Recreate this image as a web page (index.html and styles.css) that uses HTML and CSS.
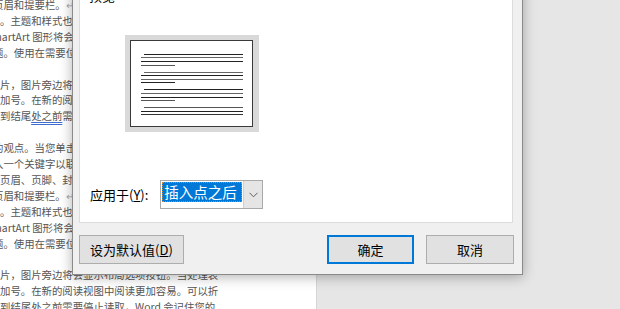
FILE: index.html
```html
<!DOCTYPE html>
<html lang="zh-CN">
<head>
    <meta charset="UTF-8">
    <title>页面设置 - 预览</title>
    <link rel="stylesheet" href="styles.css">
</head>
<body>
    <div class="workspace">
        <div class="doc-page">
            <div class="doc-text">
                <div class="line cut">页眉和提要栏。<span class="mark">↵</span></div>
                <div class="line">。主题和样式也有助于文档保持协调。</div>
                <div class="line smart">SmartArt 图形将会更改以匹配新的主题。</div>
                <div class="line cut">题。使用在需要位置出现的新按钮</div>
                <div class="line"></div>
                <div class="line">片，图片旁边将会显示布局选项按钮。当处理表</div>
                <div class="line">加号。在新的阅读视图中阅读更加容易。可以折</div>
                <div class="line">到结尾<span class="grammar">处之前</span>需要停止读取，Word 会记住您的</div>
                <div class="line"></div>
                <div class="line cut">的观点。当您单击联机视频时，可以在想要添加</div>
                <div class="line cut">入一个关键字以联机搜索最适合您的文档的视频</div>
                <div class="line">页眉、页脚、封面和文本框设计，这些设计可互</div>
                <div class="line cut">页眉和提要栏。<span class="mark">↵</span></div>
                <div class="line">。主题和样式也有助于文档保持协调。当您单击</div>
                <div class="line smart">SmartArt 图形将会更改以匹配新的主题。当应用</div>
                <div class="line cut">题。使用在需要位置出现的新按钮在 Word 中节</div>
                <div class="line"></div>
                <div class="line">片，图片旁边将会显示布局选项按钮。当处理表</div>
                <div class="line">加号。在新的阅读视图中阅读更加容易。可以折</div>
                <div class="line">到结尾处之前需要停止读取，Word 会记住您的</div>
            </div>
        </div>
    </div>

    <div class="dialog">
        <div class="panel">
            <div class="group-label">预览</div>

            <div class="preview">
                <div class="preview-page">
                    <svg width="121" height="85" viewBox="0 0 121 85" shape-rendering="crispEdges">
                        <rect x="13" y="13" width="99" height="1" fill="#222"/>
                        <rect x="10" y="16" width="102" height="1" fill="#666"/>
                        <rect x="10" y="20" width="102" height="1" fill="#222"/>
                        <rect x="10" y="24" width="34" height="1" fill="#555"/>

                        <rect x="13" y="31" width="99" height="1" fill="#666"/>
                        <rect x="10" y="34" width="102" height="1" fill="#222"/>
                        <rect x="10" y="38" width="102" height="1" fill="#666"/>
                        <rect x="10" y="41" width="34" height="1" fill="#222"/>

                        <rect x="13" y="48" width="99" height="1" fill="#222"/>
                        <rect x="10" y="52" width="102" height="1" fill="#666"/>
                        <rect x="10" y="56" width="102" height="1" fill="#222"/>
                        <rect x="10" y="59" width="34" height="1" fill="#555"/>

                        <rect x="13" y="66" width="99" height="1" fill="#555"/>
                        <rect x="10" y="70" width="102" height="1" fill="#222"/>
                        <rect x="10" y="73" width="102" height="1" fill="#333"/>
                    </svg>
                </div>
            </div>

            <div class="apply-row">
                <label class="apply-label">应用于(<u>Y</u>):</label>
                <div class="combo">
                    <div class="combo-field">
                        <div class="combo-sel">插入点之后</div>
                    </div>
                    <div class="combo-btn">
                        <svg width="9" height="6" viewBox="0 0 9 6">
                            <polyline points="0.5,0.8 4.5,4.8 8.5,0.8" fill="none" stroke="#606060" stroke-width="1"/>
                        </svg>
                    </div>
                </div>
            </div>
        </div>

        <div class="button-row">
            <button class="btn btn-default">设为默认值(<u>D</u>)</button>
            <div class="button-group">
                <button class="btn btn-primary">确定</button>
                <button class="btn">取消</button>
            </div>
        </div>
    </div>
</body>
</html>
```

FILE: styles.css
```css
* {
    margin: 0;
    padding: 0;
    box-sizing: border-box;
}

body {
    width: 620px;
    height: 309px;
    overflow: hidden;
    background: #e6e6e6;
    font-family: "Noto Sans CJK SC", "Noto Sans", sans-serif;
    position: relative;
}

.workspace {
    height: 309px;
}

/* 문서 페이지 (배경) */
.doc-page {
    width: 317px;
    height: 309px;
    background: #fff;
    border-right: 1px solid #d6d6d6;
    overflow: hidden;
}

.doc-text {
    margin-top: -3px;
    font-size: 10.4px;
    color: #555;
}

.line {
    height: 15.92px;
    line-height: 15.92px;
    white-space: nowrap;
}

.line.cut {
    text-indent: -7px;
}

.line.smart {
    text-indent: -14px;
}

.mark {
    color: #a8a8a8;
}

.grammar {
    text-decoration: underline double #3d6fd1;
    text-underline-offset: 2px;
}

/* 대화상자 */
.dialog {
    position: absolute;
    left: 72px;
    top: -30px;
    width: 451px;
    background: #f0f0f0;
    border: 1px solid #8a8a8a;
    box-shadow: 0 2px 12px rgba(0, 0, 0, 0.3);
    padding: 0 8px 10px 6px;
    font-size: 13px;
    color: #000;
}

.panel {
    background: #fff;
    border: 1px solid #dcdcdc;
    border-top: 0;
    margin-right: 1px;
    padding: 16px 0 13px 0;
}

.group-label {
    margin-left: 9px;
    height: 18px;
    line-height: 18px;
}

.preview {
    margin: 30px 0 0 45px;
    width: 134px;
    height: 97px;
    background: #d9d9d9;
    padding: 5px 6px 5px 5px;
}

.preview-page {
    width: 123px;
    height: 87px;
    background: #fff;
    border: 1px solid #3a3a3a;
}

.preview-page svg {
    display: block;
}

.apply-row {
    margin: 48px 0 0 10px;
    display: flex;
    align-items: center;
    gap: 12px;
}

.apply-label {
    line-height: 18px;
}

.combo {
    display: flex;
    width: 103px;
    height: 29px;
    border: 1px solid #a9a9a9;
    background: #fff;
}

.combo-field {
    flex: 1;
    padding: 1px 1px 0 1px;
}

.combo-sel {
    height: 20px;
    line-height: 17px;
    background: #0078d7;
    color: #fff;
    font-size: 14.5px;
    border: 1px dotted #c9893f;
    padding-left: 1px;
}

.combo-btn {
    width: 19px;
    background: #e5e5e5;
    border-left: 1px solid #d0d0d0;
    display: flex;
    align-items: center;
    justify-content: center;
}

.button-row {
    display: flex;
    justify-content: space-between;
    margin-top: 12px;
}

.button-group {
    display: flex;
    gap: 12px;
}

.btn {
    height: 29px;
    width: 87px;
    background: #e1e1e1;
    border: 1px solid #adadad;
    font-family: inherit;
    font-size: 13px;
    color: #000;
}

.btn-default {
    width: 105px;
}

.btn-primary {
    border-color: #0078d7;
    box-shadow: inset 0 0 0 1px #0078d7;
}

.btn:last-child {
    width: 88px;
}
```
